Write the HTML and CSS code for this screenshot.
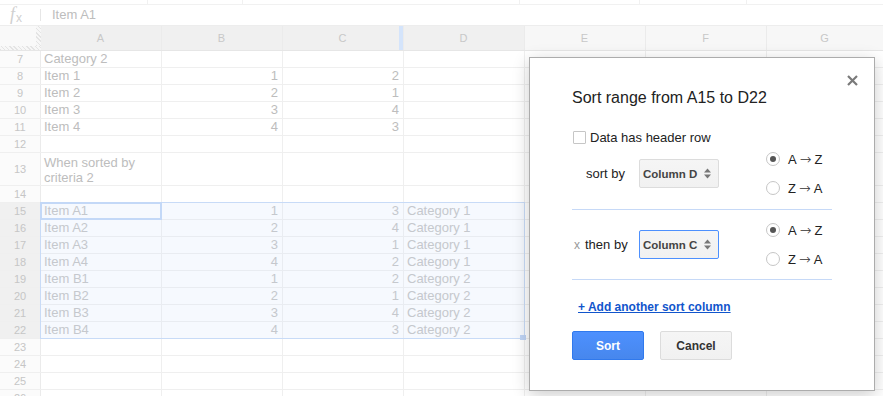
FILE: index.html
```html
<!DOCTYPE html>
<html lang="en">
<head>
  <meta charset="UTF-8" />
  <title>Sheet — Sort range</title>
  <link rel="stylesheet" href="styles.css">
</head>
<body>
  <div class="toolbar">
    <span class="tb-group" style="width:148px"></span>
    <span class="tb-group" style="width:95px"></span>
    <span class="tb-group" style="width:277px"></span>
    <span class="tb-group" style="width:120px"></span>
    <span class="tb-group" style="width:107px"></span>
  </div>

  <div class="formula-bar">
    <span class="fx"><i>f</i><span class="fx-sub">x</span></span>
    <span class="formula">Item A1</span>
  </div>

  <div class="sheet">
    <div class="row head">
      <div class="rh corner"></div>
      <div class="cell sel">A</div>
      <div class="cell sel">B</div>
      <div class="cell sel resize">C</div>
      <div class="cell sel">D</div>
      <div class="cell">E</div>
      <div class="cell">F</div>
      <div class="cell last">G</div>
    </div>
    <div class="row"><div class="rh">7</div><div class="cell">Category 2</div><div class="cell"></div><div class="cell"></div><div class="cell"></div><div class="cell"></div><div class="cell"></div><div class="cell last"></div></div>
    <div class="row"><div class="rh">8</div><div class="cell">Item 1</div><div class="cell num">1</div><div class="cell num">2</div><div class="cell"></div><div class="cell"></div><div class="cell"></div><div class="cell last"></div></div>
    <div class="row"><div class="rh">9</div><div class="cell">Item 2</div><div class="cell num">2</div><div class="cell num">1</div><div class="cell"></div><div class="cell"></div><div class="cell"></div><div class="cell last"></div></div>
    <div class="row"><div class="rh">10</div><div class="cell">Item 3</div><div class="cell num">3</div><div class="cell num">4</div><div class="cell"></div><div class="cell"></div><div class="cell"></div><div class="cell last"></div></div>
    <div class="row"><div class="rh">11</div><div class="cell">Item 4</div><div class="cell num">4</div><div class="cell num">3</div><div class="cell"></div><div class="cell"></div><div class="cell"></div><div class="cell last"></div></div>
    <div class="row"><div class="rh">12</div><div class="cell"></div><div class="cell"></div><div class="cell"></div><div class="cell"></div><div class="cell"></div><div class="cell"></div><div class="cell last"></div></div>
    <div class="row tall"><div class="rh">13</div><div class="cell">When sorted by criteria 2</div><div class="cell"></div><div class="cell"></div><div class="cell"></div><div class="cell"></div><div class="cell"></div><div class="cell last"></div></div>
    <div class="row"><div class="rh">14</div><div class="cell"></div><div class="cell"></div><div class="cell"></div><div class="cell"></div><div class="cell"></div><div class="cell"></div><div class="cell last"></div></div>
    <div class="row in-range"><div class="rh">15</div><div class="cell">Item A1</div><div class="cell num">1</div><div class="cell num">3</div><div class="cell">Category 1</div><div class="cell"></div><div class="cell"></div><div class="cell last"></div></div>
    <div class="row in-range"><div class="rh">16</div><div class="cell">Item A2</div><div class="cell num">2</div><div class="cell num">4</div><div class="cell">Category 1</div><div class="cell"></div><div class="cell"></div><div class="cell last"></div></div>
    <div class="row in-range"><div class="rh">17</div><div class="cell">Item A3</div><div class="cell num">3</div><div class="cell num">1</div><div class="cell">Category 1</div><div class="cell"></div><div class="cell"></div><div class="cell last"></div></div>
    <div class="row in-range"><div class="rh">18</div><div class="cell">Item A4</div><div class="cell num">4</div><div class="cell num">2</div><div class="cell">Category 1</div><div class="cell"></div><div class="cell"></div><div class="cell last"></div></div>
    <div class="row in-range"><div class="rh">19</div><div class="cell">Item B1</div><div class="cell num">1</div><div class="cell num">2</div><div class="cell">Category 2</div><div class="cell"></div><div class="cell"></div><div class="cell last"></div></div>
    <div class="row in-range"><div class="rh">20</div><div class="cell">Item B2</div><div class="cell num">2</div><div class="cell num">1</div><div class="cell">Category 2</div><div class="cell"></div><div class="cell"></div><div class="cell last"></div></div>
    <div class="row in-range"><div class="rh">21</div><div class="cell">Item B3</div><div class="cell num">3</div><div class="cell num">4</div><div class="cell">Category 2</div><div class="cell"></div><div class="cell"></div><div class="cell last"></div></div>
    <div class="row in-range"><div class="rh">22</div><div class="cell">Item B4</div><div class="cell num">4</div><div class="cell num">3</div><div class="cell">Category 2</div><div class="cell"></div><div class="cell"></div><div class="cell last"></div></div>
    <div class="row"><div class="rh">23</div><div class="cell"></div><div class="cell"></div><div class="cell"></div><div class="cell"></div><div class="cell"></div><div class="cell"></div><div class="cell last"></div></div>
    <div class="row"><div class="rh">24</div><div class="cell"></div><div class="cell"></div><div class="cell"></div><div class="cell"></div><div class="cell"></div><div class="cell"></div><div class="cell last"></div></div>
    <div class="row"><div class="rh">25</div><div class="cell"></div><div class="cell"></div><div class="cell"></div><div class="cell"></div><div class="cell"></div><div class="cell"></div><div class="cell last"></div></div>
    <div class="row"><div class="rh">26</div><div class="cell"></div><div class="cell"></div><div class="cell"></div><div class="cell"></div><div class="cell"></div><div class="cell"></div><div class="cell last"></div></div>

    <!-- selection A15:D22 -->
    <div class="range"></div>
    <div class="active-cell"></div>
    <div class="fill-handle"></div>
  </div>

  <div class="dialog">
    <span class="close">
      <svg width="11" height="11" viewBox="0 0 11 11"><path d="M1 1 L10 10 M10 1 L1 10" stroke="#7a7a7a" stroke-width="2.2" fill="none"/></svg>
    </span>
    <h2 class="title">Sort range from A15 to D22</h2>

    <label class="header-row"><span class="checkbox"></span>Data has header row</label>

    <div class="sort-block first">
      <div class="sort-label">sort by</div>
      <div class="select"><span>Column D</span>
        <svg width="7" height="11" viewBox="0 0 7 11"><polygon points="0,4.5 3.5,0.5 7,4.5" fill="#777"/><polygon points="0,6.5 7,6.5 3.5,10.5" fill="#777"/></svg>
      </div>
      <div class="order">
        <div class="option"><span class="radio checked"></span>A<span class="arrow">→</span>Z</div>
        <div class="option"><span class="radio"></span>Z<span class="arrow">→</span>A</div>
      </div>
    </div>

    <div class="sort-block">
      <div class="sort-label second"><span class="remove">x</span>then by</div>
      <div class="select focused"><span>Column C</span>
        <svg width="7" height="11" viewBox="0 0 7 11"><polygon points="0,4.5 3.5,0.5 7,4.5" fill="#777"/><polygon points="0,6.5 7,6.5 3.5,10.5" fill="#777"/></svg>
      </div>
      <div class="order">
        <div class="option"><span class="radio checked"></span>A<span class="arrow">→</span>Z</div>
        <div class="option"><span class="radio"></span>Z<span class="arrow">→</span>A</div>
      </div>
    </div>

    <a href="#" class="add-link">+ Add another sort column</a>

    <div class="buttons">
      <button class="btn-sort">Sort</button>
      <button class="btn-cancel">Cancel</button>
    </div>
  </div>
</body>
</html>
```

FILE: styles.css
```css
body {
  margin: 0;
  width: 883px;
  height: 396px;
  overflow: hidden;
  position: relative;
  background: #fff;
  font-family: "Liberation Sans", Arial, sans-serif;
  font-size: 13px;
}

/* top strip (cut-off toolbar) */
.toolbar {
  display: flex;
  height: 5px;
  box-sizing: border-box;
  border-bottom: 1px solid #f1f1f1;
}

.tb-group {
  box-sizing: border-box;
  border-right: 1px solid #f1f1f1;
}

/* formula bar */
.formula-bar {
  display: flex;
  align-items: center;
  height: 21px;
  box-sizing: border-box;
  border-bottom: 1px solid #ededed;
}

.fx {
  width: 40px;
  box-sizing: border-box;
  padding-left: 10px;
  font-family: "Liberation Serif", serif;
  font-size: 18px;
  color: #d0d0d0;
  line-height: 14px;
}

.fx-sub {
  font-family: "Liberation Sans", Arial, sans-serif;
  font-size: 12px;
  position: relative;
  top: 2px;
  left: 1px;
}

.formula {
  border-left: 1px solid #e6e6e6;
  padding-left: 11px;
  line-height: 12px;
  color: #bdbdbd;
}

/* grid */
.sheet {
  position: relative;
}

.row {
  display: flex;
  height: 17px;
  box-sizing: border-box;
  border-bottom: 1px solid #efefef;
}

.rh {
  width: 41px;
  flex-shrink: 0;
  box-sizing: border-box;
  border-right: 1px solid #ebebeb;
  background: #fbfbfb;
  text-align: center;
  font-size: 11px;
  line-height: 17px;
  color: #c6c6c6;
}

.cell {
  width: 121px;
  flex-shrink: 0;
  box-sizing: border-box;
  border-right: 1px solid #efefef;
  padding: 0 4px 0 3px;
  line-height: 16px;
  color: #bdbdbd;
  white-space: nowrap;
  overflow: hidden;
}

.cell.num {
  text-align: right;
}

.cell.last {
  flex: 1;
  border-right: 0;
}

.row.tall {
  height: 33px;
}

.row.tall .cell {
  white-space: normal;
  line-height: 15px;
  padding-top: 2px;
}

.row.tall .rh {
  line-height: 32px;
}

.row.in-range .rh {
  background: #f0f0f0;
}

.row.in-range .cell {
  color: #c4c4c4;
}

.row.head {
  height: 25px;
  border-bottom-color: #e6e6e6;
}

.row.head .cell {
  background: #f7f7f7;
  text-align: center;
  font-size: 11px;
  line-height: 24px;
  color: #c8c8c8;
  border-right-color: #ebebeb;
}

.row.head .cell.sel {
  background: #f0f0f0;
}

.row.head .cell.resize {
  position: relative;
}

.row.head .cell.resize::after {
  content: "";
  position: absolute;
  right: 0;
  top: 0;
  width: 4px;
  height: 24px;
  background: #d4e4fb;
}

.corner {
  position: relative;
  background: #f9f9f9;
  border-right: 0;
}

.corner::before,
.corner::after {
  content: "";
  position: absolute;
  background: repeating-linear-gradient(45deg, #e4e4e4 0 1px, #f7f7f7 1px 3px);
}

.corner::before {
  right: 0;
  top: 0;
  width: 5px;
  height: 24px;
}

.corner::after {
  left: 0;
  bottom: 0;
  width: 41px;
  height: 4px;
}

/* selection */
.range {
  position: absolute;
  left: 40px;
  top: 176px;
  width: 485px;
  height: 137px;
  box-sizing: border-box;
  border: 1px solid #c8dbf7;
  background: rgba(205, 222, 250, 0.18);
}

.active-cell {
  position: absolute;
  left: 40px;
  top: 176px;
  width: 122px;
  height: 18px;
  box-sizing: border-box;
  border: 2px solid #c3d8f7;
}

.fill-handle {
  position: absolute;
  left: 520px;
  top: 309px;
  width: 6px;
  height: 5px;
  background: #bfd4f5;
}

/* sort dialog */
.dialog {
  position: absolute;
  left: 529px;
  top: 57px;
  width: 346px;
  box-sizing: border-box;
  padding: 30px 42px;
  background: #fff;
  border: 1px solid #acacac;
  box-shadow: 0 4px 16px rgba(0, 0, 0, 0.2);
  color: #222;
}

.close {
  position: absolute;
  top: 17px;
  right: 16px;
  width: 11px;
  height: 11px;
  line-height: 0;
}

.title {
  margin: 0;
  font-size: 16px;
  font-weight: normal;
  line-height: 20px;
}

.header-row {
  display: flex;
  align-items: center;
  height: 14px;
  margin-top: 22px;
}

.checkbox {
  width: 13px;
  height: 13px;
  box-sizing: border-box;
  margin: 0 4px 0 1px;
  border: 1px solid #c6c6c6;
  border-radius: 1px;
}

.sort-block {
  display: flex;
  align-items: center;
  padding: 13px 0;
  border-bottom: 1px solid #c6d9f7;
}

.sort-block.first {
  margin-top: 6px;
  padding: 2px 0 14px;
}

.sort-label {
  width: 67px;
  box-sizing: border-box;
  padding-left: 14px;
}

.sort-label.second {
  padding-left: 2px;
}

.remove {
  display: inline-block;
  width: 11px;
  color: #999;
  font-size: 12px;
}

.select {
  display: flex;
  align-items: center;
  justify-content: space-between;
  width: 80px;
  height: 29px;
  box-sizing: border-box;
  padding: 0 7px 0 3px;
  background: linear-gradient(#f5f5f5, #f1f1f1);
  border: 1px solid #dcdcdc;
  border-radius: 2px;
  font-size: 11.5px;
  font-weight: bold;
  color: #444;
}

.select.focused {
  border-color: #4d90fe;
}

.order {
  margin-left: auto;
  width: 66px;
  display: flex;
  flex-direction: column;
  gap: 15px;
}

.option {
  display: flex;
  align-items: center;
  height: 14px;
}

.arrow {
  margin: 0 3px;
  font-family: "DejaVu Sans", sans-serif;
  font-size: 14px;
  font-weight: 200;
  color: #333;
}

.radio {
  width: 14px;
  height: 14px;
  box-sizing: border-box;
  margin-right: 8px;
  border: 1px solid #c6c6c6;
  border-radius: 50%;
  position: relative;
}

.radio.checked::after {
  content: "";
  position: absolute;
  left: 3px;
  top: 3px;
  width: 6px;
  height: 6px;
  border-radius: 50%;
  background: #555;
}

.add-link {
  display: block;
  margin-top: 19px;
  padding-left: 6px;
  line-height: 16px;
  font-size: 12px;
  font-weight: bold;
  color: #1155cc;
  text-decoration: underline;
}

.buttons {
  display: flex;
  gap: 16px;
  margin-top: 16px;
}

button {
  width: 72px;
  height: 29px;
  padding: 0;
  border-radius: 2px;
  font-family: "Liberation Sans", Arial, sans-serif;
  font-size: 12px;
  font-weight: bold;
  cursor: pointer;
}

.btn-sort {
  background: linear-gradient(#4d90fe, #4787ed);
  border: 1px solid #3079ed;
  color: #fff;
}

.btn-cancel {
  background: linear-gradient(#f5f5f5, #f1f1f1);
  border: 1px solid #dcdcdc;
  color: #333;
}
```
